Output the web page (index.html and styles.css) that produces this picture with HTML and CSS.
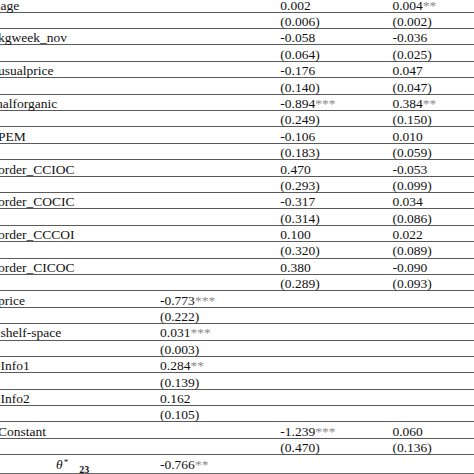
FILE: index.html
```html
<!DOCTYPE html>
<html>
<head>
<meta charset="utf-8">
<link rel="stylesheet" href="styles.css">
</head>
<body>
<div class="reg">
  <div class="row"><span class="lab o0">age</span><span></span><span>0.002</span><span>0.004<span class="s">**</span></span></div>
  <div class="row"><span></span><span></span><span>(0.006)</span><span>(0.002)</span></div>
  <div class="row"><span class="lab o2">kgweek_nov</span><span></span><span>-0.058</span><span>-0.036</span></div>
  <div class="row"><span></span><span></span><span>(0.064)</span><span>(0.025)</span></div>
  <div class="row"><span class="lab o2">usualprice</span><span></span><span>-0.176</span><span>0.047</span></div>
  <div class="row"><span></span><span></span><span>(0.140)</span><span>(0.047)</span></div>
  <div class="row"><span class="lab o4">halforganic</span><span></span><span>-0.894<span class="s">***</span></span><span>0.384<span class="s">**</span></span></div>
  <div class="row"><span></span><span></span><span>(0.249)</span><span>(0.150)</span></div>
  <div class="row"><span class="lab o2">PEM</span><span></span><span>-0.106</span><span>0.010</span></div>
  <div class="row"><span></span><span></span><span>(0.183)</span><span>(0.059)</span></div>
  <div class="row"><span class="lab o2">order_CCIOC</span><span></span><span>0.470</span><span>-0.053</span></div>
  <div class="row"><span></span><span></span><span>(0.293)</span><span>(0.099)</span></div>
  <div class="row"><span class="lab o2">order_COCIC</span><span></span><span>-0.317</span><span>0.034</span></div>
  <div class="row"><span></span><span></span><span>(0.314)</span><span>(0.086)</span></div>
  <div class="row"><span class="lab o2">order_CCCOI</span><span></span><span>0.100</span><span>0.022</span></div>
  <div class="row"><span></span><span></span><span>(0.320)</span><span>(0.089)</span></div>
  <div class="row"><span class="lab o2">order_CICOC</span><span></span><span>0.380</span><span>-0.090</span></div>
  <div class="row"><span></span><span></span><span>(0.289)</span><span>(0.093)</span></div>
  <div class="row"><span class="lab o2">price</span><span>-0.773<span class="s">***</span></span><span></span><span></span></div>
  <div class="row"><span></span><span>(0.222)</span><span></span><span></span></div>
  <div class="row"><span class="lab o0">shelf-space</span><span>0.031<span class="s">***</span></span><span></span><span></span></div>
  <div class="row"><span></span><span>(0.003)</span><span></span><span></span></div>
  <div class="row"><span class="lab o0">Info1</span><span>0.284<span class="s">**</span></span><span></span><span></span></div>
  <div class="row"><span></span><span>(0.139)</span><span></span><span></span></div>
  <div class="row"><span class="lab o0">Info2</span><span>0.162</span><span></span><span></span></div>
  <div class="row"><span></span><span>(0.105)</span><span></span><span></span></div>
  <div class="row"><span class="lab o2">Constant</span><span></span><span>-1.239<span class="s">***</span></span><span>0.060</span></div>
  <div class="row"><span></span><span></span><span>(0.470)</span><span>(0.136)</span></div>
  <div class="row last"><span class="theta"><i>θ</i><sup>*</sup><sub>23</sub></span><span>-0.766<span class="s">**</span></span><span></span><span></span></div>
</div>
</body>
</html>
```
FILE: styles.css
```css
html, body {
  margin: 0;
  padding: 0;
  background: #ffffff;
  overflow: hidden;
}
.reg {
  margin-top: -3.7px;
  font-family: "Liberation Serif", "Times New Roman", serif;
  font-size: 13.5px;
  color: #111111;
}
.row {
  display: grid;
  grid-template-columns: 160px 120.3px 112.2px 1fr;
  height: 16.4px;
  box-sizing: border-box;
  border-bottom: 1px solid #5a5a5a;
  line-height: 15.4px;
  white-space: nowrap;
}
.row > span {
  padding-top: 1.3px;
}
.row.last {
  height: 20.5px;
  border-bottom: 3px solid #6a6a6a;
}
.lab.o0 { margin-left: 0.5px; }
.lab.o2 { margin-left: -2px; }
.lab.o4 { margin-left: -4px; }
.s {
  color: #8a8a8a;
}
.theta {
  padding-left: 56px;
}
.theta i {
  font-style: italic;
}
.theta sup {
  font-size: 9px;
  vertical-align: 4px;
  line-height: 0;
  margin-left: 1px;
}
.theta sub {
  font-size: 10px;
  font-weight: bold;
  vertical-align: -4px;
  line-height: 0;
  margin-left: 11px;
}
```
